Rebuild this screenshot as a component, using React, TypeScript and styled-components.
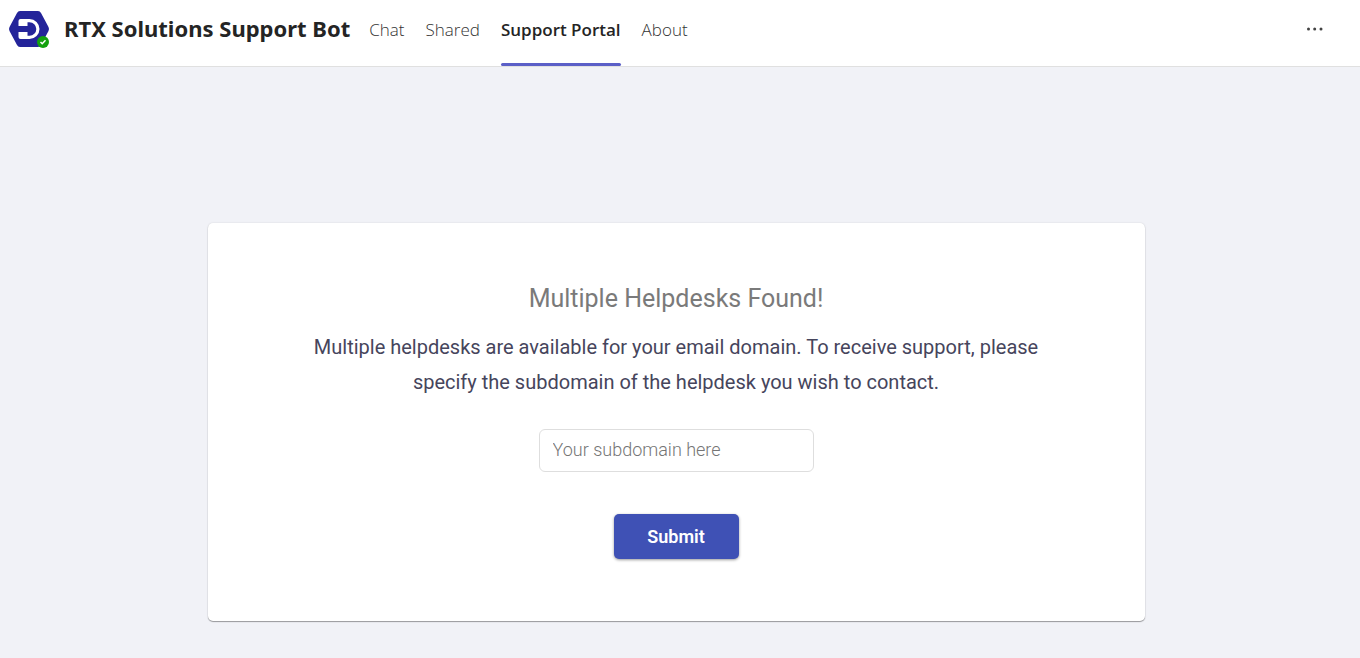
import React from 'react';
import styled, { createGlobalStyle } from 'styled-components';

const GlobalStyle = createGlobalStyle`
  * { box-sizing: border-box; }
  body { margin: 0; background: #f1f2f7; font-family: Roboto, sans-serif; }
`;

const Header = styled.header`
  display: flex;
  align-items: stretch;
  height: 67px;
  padding: 0 28px 0 8px;
  background: #fff;
  border-bottom: 1px solid #e0e0e0;
  font-family: "Open Sans", sans-serif;
`;

const Brand = styled.div`
  display: flex;
  align-items: center;
  gap: 14px;
  padding-bottom: 9px;
`;

const Title = styled.h1`
  margin: 0;
  padding-bottom: 2px;
  font-family: "Noto Sans", sans-serif;
  font-size: 22px;
  line-height: 30px;
  font-weight: 700;
  color: #242424;
  white-space: nowrap;
`;

const Nav = styled.nav`
  display: flex;
  gap: 21px;
  margin-left: 19px;
`;

const Tab = styled.a<{ $active?: boolean }>`
  position: relative;
  display: flex;
  align-items: center;
  padding-bottom: 7px;
  color: ${p => (p.$active ? '#242424' : '#333')};
  font-size: 17px;
  font-weight: ${p => (p.$active ? 550 : 350)};
  text-decoration: none;
  white-space: nowrap;

  &::after {
    content: '';
    position: absolute;
    inset: auto 0 0;
    height: 3px;
    border-radius: 2px;
    background: ${p => (p.$active ? '#5b5fc7' : 'transparent')};
  }
`;

const MoreButton = styled.button`
  display: flex;
  align-items: center;
  margin: 0 0 9px auto;
  padding: 0 8px;
  border: 0;
  background: none;
  color: #424242;
`;

const Main = styled.main`
  display: flex;
  justify-content: center;
  padding: 156px 16px 36px 8px;
`;

const Card = styled.form`
  display: flex;
  flex-direction: column;
  align-items: center;
  width: 100%;
  max-width: 937px;
  padding: 58px 100px 62px;
  background: #fff;
  border-radius: 5px;
  box-shadow: 0 1px 1px rgba(0, 0, 0, 0.35), 0 0 2px rgba(0, 0, 0, 0.12);
  text-align: center;
`;

const Heading = styled.h2`
  margin: 0 0 14px;
  font-size: 25px;
  line-height: 35px;
  font-weight: 400;
  color: #7a7a7a;
`;

const Message = styled.label`
  font-size: 20px;
  line-height: 35px;
  color: #46455c;
`;

const Field = styled.input`
  width: 275px;
  height: 43px;
  margin: 29px 0 42px;
  padding: 0 13px 2px;
  border: 1px solid #dedede;
  border-radius: 6px;
  font-family: inherit;
  font-size: 18px;
  font-weight: 300;
  color: #3f3d56;
  &::placeholder { color: #757575; opacity: 1; }
`;

const Submit = styled.button`
  width: 125px;
  height: 45px;
  border: 0;
  border-radius: 5px;
  background: #3f51b5;
  box-shadow: 0 1px 3px rgba(0, 0, 0, 0.4);
  color: #fff;
  font-family: inherit;
  font-size: 18px;
  font-weight: 600;
`;

const Logo = () => (
  <svg width="42" height="40" viewBox="0 0 42 40" aria-hidden="true">
    <path d="M12 2h18q2 0 3 2l7.500 14q1 2 0 4l-7.500 14q-1 2-3 2H12q-2 0-3-2L1.500 22q-1-2 0-4L9 4q1-2 3-2z" fill="#24249a" />
    <path d="M12.500 10H21.500a10 10 0 0 1 0 20H12.500q-2 0-2-2V23H19.500V26.800h2a6.800 6.800 0 0 0 0-13.600H19.500V17h-9v-5q0-2 2-2z" fill="#fff" />
    <circle cx="35" cy="33" r="6" fill="#13a10e" />
    <path d="M32.500 33l1.700 1.700 3.300-3.400" fill="none" stroke="#fff" strokeWidth="1.500" />
  </svg>
);

export default function App() {
  return (
    <>
      <GlobalStyle />
      <Header>
        <Brand>
          <Logo />
          <Title>RTX Solutions Support Bot</Title>
        </Brand>
        <Nav>
          <Tab href="#chat">Chat</Tab>
          <Tab href="#shared">Shared</Tab>
          <Tab href="#portal" $active aria-current="page">Support Portal</Tab>
          <Tab href="#about">About</Tab>
        </Nav>
        <MoreButton type="button" aria-label="More options">
          <svg width="18" height="4" viewBox="0 0 18 4" fill="currentColor">
            <circle cx="2.500" cy="2" r="1.500" />
            <circle cx="8.700" cy="2" r="1.500" />
            <circle cx="15" cy="2" r="1.500" />
          </svg>
        </MoreButton>
      </Header>
      <Main>
        <Card onSubmit={e => e.preventDefault()}>
          <Heading>Multiple Helpdesks Found!</Heading>
          <Message htmlFor="subdomain">
            Multiple helpdesks are available for your email domain. To receive support, please specify the subdomain of the helpdesk you wish to contact.
          </Message>
          <Field id="subdomain" type="text" placeholder="Your subdomain here" />
          <Submit type="submit">Submit</Submit>
        </Card>
      </Main>
    </>
  );
}
